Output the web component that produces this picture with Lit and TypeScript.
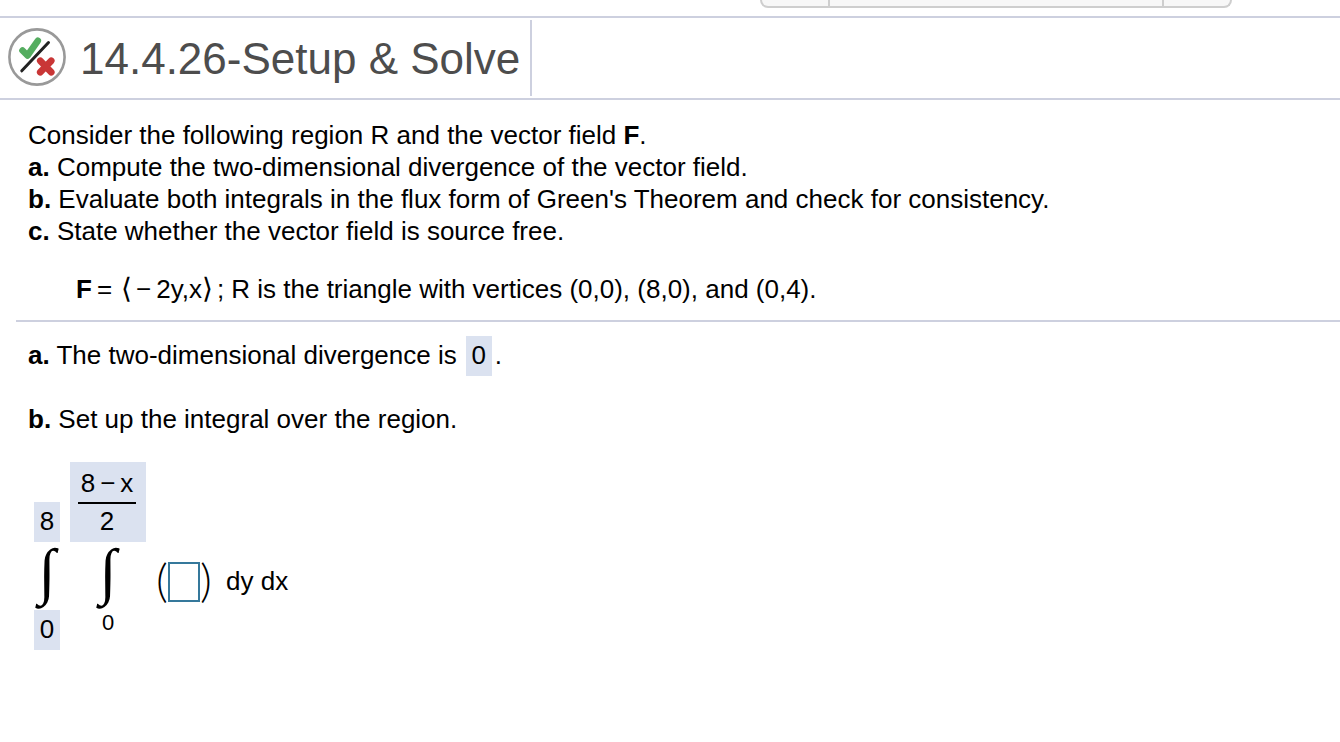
import { LitElement, html, css } from "lit";
import { customElement } from "lit/decorators.js";

@customElement("app-root")
export class AppRoot extends LitElement {
  static styles = css`
    :host {
      display: block;
      min-height: 100vh;
      background: #fff;
      color: #000;
      font: 26px/32px "Liberation Sans", Arial, sans-serif;
    }
    .toolbar {
      display: flex;
      justify-content: flex-end;
      height: 16px;
      padding-right: 108px;
      align-items: flex-start;
    }
    .group {
      display: flex;
      box-sizing: border-box;
      width: 472px;
      height: 8px;
      border: 2px solid #cecece;
      border-top: 0;
      border-radius: 0 0 8px 8px;
      background: #f7f7f7;
    }
    .side {
      flex: 0 0 66px;
    }
    .middle {
      flex: 1;
      border: solid #cecece;
      border-width: 0 2px;
    }
    .header {
      display: flex;
      height: 80px;
      border: solid #cdd0df;
      border-width: 2px 0;
    }
    .heading {
      display: flex;
      align-items: flex-start;
      gap: 14px;
      box-sizing: border-box;
      margin: 2px 0;
      padding: 8px 10px 0 8px;
      border-right: 2px solid #cdd0df;
    }
    .status {
      width: 58px;
      height: 58px;
      flex: none;
    }
    h1 {
      margin: 0;
      font-size: 44px;
      line-height: 62px;
      font-weight: 400;
      color: #4d4d4d;
      white-space: nowrap;
    }
    p {
      margin: 0;
    }
    .question {
      margin-left: 16px;
      padding: 19px 12px 15px;
      border-bottom: 2px solid #cdd0df;
    }
    .given {
      display: flex;
      margin: 26px 0 0 48px;
    }
    .eq {
      margin: 0 9px 0 5px;
    }
    .angle {
      font-family: "DejaVu Sans", sans-serif;
      font-size: 28px;
      font-weight: 200;
    }
    .minus {
      margin: 0 5px 0 4px;
    }
    .semi {
      margin: 0 7px 0 4px;
    }
    .work {
      padding: 14px 28px;
    }
    .answer {
      display: inline-block;
      box-sizing: border-box;
      min-width: 26px;
      height: 40px;
      padding: 0 5px 2px;
      line-height: 38px;
      text-align: center;
      background: #dbe2f0;
    }
    .line {
      display: flex;
      align-items: baseline;
    }
    .line .answer {
      margin: 0 3px 0 9px;
    }
    .setup {
      margin-top: 27px;
    }
    .integral {
      display: grid;
      grid-template-columns: 26px 76px auto;
      grid-template-rows: 80px 68px 40px;
      column-gap: 10px;
      justify-content: start;
      justify-items: center;
      margin: 27px 0 0 6px;
    }
    .upper {
      align-self: end;
    }
    .fraction {
      display: flex;
      flex-direction: column;
      box-sizing: border-box;
      width: 76px;
      height: 80px;
      padding: 4px 10px 4px 8px;
      text-align: center;
      background: #dbe2f0;
    }
    .numerator {
      display: flex;
      justify-content: center;
      gap: 5px;
      line-height: 34px;
      padding-bottom: 2px;
      border-bottom: 2px solid #000;
    }
    .denominator {
      line-height: 34px;
    }
    .sign {
      font-family: "Liberation Serif", serif;
      font-size: 62px;
      line-height: 58px;
    }
    .plain {
      font-size: 22px;
      line-height: 26px;
    }
    .integrand {
      display: flex;
      align-items: center;
      height: 80px;
    }
    .paren {
      width: 12px;
      font-family: Lato, sans-serif;
      font-weight: 300;
      font-size: 46px;
      line-height: 40px;
      padding-bottom: 4px;
      text-align: center;
    }
    .blank {
      box-sizing: border-box;
      width: 32px;
      height: 40px;
      padding: 0 6px;
      border: 2px solid #35789b;
      border-radius: 0;
      background: #fff;
      font: inherit;
      outline: none;
    }
    .measure {
      margin-left: 14px;
      padding-bottom: 2px;
    }
  `;

  render() {
    return html`
      <div class="toolbar">
        <div class="group">
          <div class="side"></div>
          <div class="middle"></div>
          <div class="side"></div>
        </div>
      </div>
      <header class="header">
        <div class="heading">
          <svg class="status" viewBox="0 0 58 58" fill="none" stroke-linecap="round" role="img" aria-label="Partially correct">
            <circle cx="29" cy="29" r="27.6" stroke="#999" stroke-width="2.6" />
            <path d="M14.5 22.5L19.5 27.5L29.8 12.8" stroke="#55ad60" stroke-width="6.6" stroke-linejoin="round" />
            <path d="M13.8 42.8L40.5 14.5" stroke="#222" stroke-width="3" />
            <path d="M32.3 32.8L43.2 44.2M43.2 32.8L32.3 44.2" stroke="#c93636" stroke-width="6.8" />
          </svg>
          <h1>14.4.26-Setup &amp; Solve</h1>
        </div>
      </header>
      <main>
        <section class="question">
          <p>Consider the following region R and the vector field <b>F</b>.</p>
          <p><b>a.</b> Compute the two-dimensional divergence of the vector field.</p>
          <p><b>b.</b> Evaluate both integrals in the flux form of Green's Theorem and check for consistency.</p>
          <p><b>c.</b> State whether the vector field is source free.</p>
          <p class="given">
            <b>F</b><span class="eq">=</span><span class="angle">⟨</span><span class="minus">−</span><span>2y,x</span><span class="angle">⟩</span><span class="semi">;</span><span>R is the triangle with vertices (0,0), (8,0), and (0,4).</span>
          </p>
        </section>
        <section class="work">
          <p class="line"><span><b>a.</b> The two-dimensional divergence is</span><span class="answer">0</span>.</p>
          <p class="setup"><b>b.</b> Set up the integral over the region.</p>
          <div class="integral">
            <span class="answer upper">8</span>
            <span class="fraction upper">
              <span class="numerator"><span>8</span><span>−</span><span>x</span></span>
              <span class="denominator">2</span>
            </span>
            <span></span>
            <span class="sign">∫</span>
            <span class="sign">∫</span>
            <span class="integrand">
              <span class="paren">(</span><input class="blank" type="text" aria-label="Integrand" /><span class="paren">)</span>
              <span class="measure">dy dx</span>
            </span>
            <span class="answer">0</span>
            <span class="plain">0</span>
          </div>
        </section>
      </main>
    `;
  }
}
